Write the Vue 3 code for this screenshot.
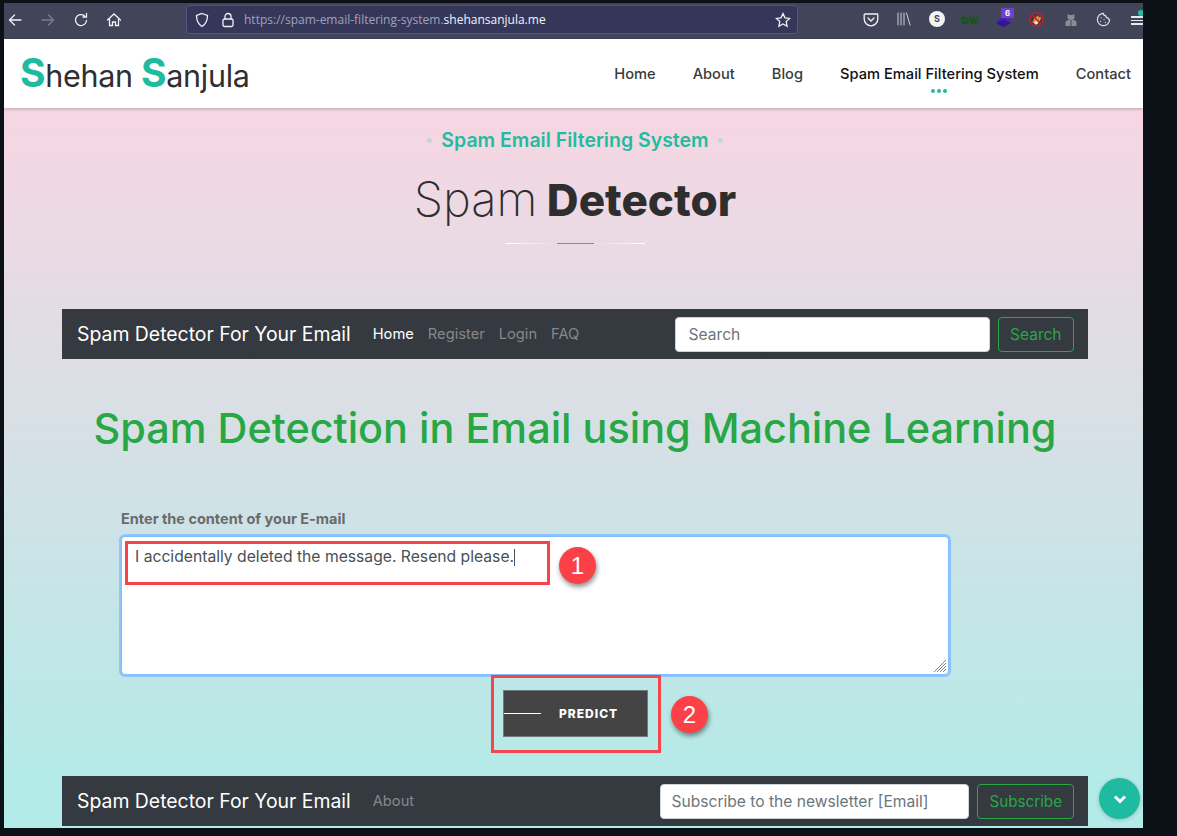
<script setup>
const navLinks = [
  { label: 'Home' },
  { label: 'About' },
  { label: 'Blog' },
  { label: 'Spam Email Filtering System', active: true },
  { label: 'Contact' },
]
const detectorLinks = ['Home', 'Register', 'Login', 'FAQ']
</script>

<template>
  <div class="frame">
    <!-- browser toolbar -->
    <div class="toolbar">
      <div class="tool-btns">
        <svg class="ico" viewBox="0 0 16 16"><path d="M14 8H2.500M7.500 3 2.500 8l5 5" /></svg>
        <svg class="ico dim" viewBox="0 0 16 16"><path d="M2 8h11.500M8.500 3l5 5-5 5" /></svg>
        <svg class="ico" viewBox="0 0 16 16"><path d="M13.500 8.500A5.500 5.500 0 1 1 11.500 3.800M13.500 1.500v3.500H10" /></svg>
        <svg class="ico" viewBox="0 0 16 16"><path d="M1.500 8 8 2l6.500 6M3.500 7v6.500h3V10h3v3.500h3V7" /></svg>
      </div>
      <div class="urlbar">
        <svg class="ico shield" viewBox="0 0 16 16"><path d="M8 1.500 13.500 3.500c0 5-1.500 8.500-5.500 11-4-2.500-5.500-6-5.500-11z" /></svg>
        <svg class="ico lock" viewBox="0 0 16 16"><rect x="3" y="7" width="10" height="7.500" rx="1.500" /><path d="M5 7V4.500a3 3 0 0 1 6 0V7" /></svg>
        <span class="url"><span class="url-dim">https://spam-email-filtering-system.</span>shehansanjula.me</span>
        <svg class="ico star" viewBox="0 0 16 16"><path d="m8 1.500 2 4.300 4.700.6-3.500 3.200.9 4.700L8 12l-4.100 2.300.9-4.700L1.300 6.400 6 5.800z" /></svg>
      </div>
      <div class="addons">
        <svg class="ico pocket" viewBox="0 0 16 16"><path d="M2 3h12a.8.8 0 0 1 .8.8V8a6.800 6.800 0 0 1-13.600 0V3.800A.8.8 0 0 1 2 3zM5 7l3 3 3-3" /></svg>
        <svg class="ico library" viewBox="0 0 16 16"><path d="M2 2v12M5 2v12M8 2v12M10.500 2l3.500 12" /></svg>
        <span class="addon-s">S</span>
        <span class="addon-bw">bw</span>
        <span class="addon-stack">
          <svg viewBox="0 0 16 12"><path d="M8 0 16 4.500 8 9 0 4.500z" fill="#4a24b8" /><path d="M0 7 8 11.500 16 7 8 3z" fill="#33168f" /></svg>
          <b>6</b>
        </span>
        <svg class="addon-fox" viewBox="0 0 16 16">
          <circle cx="8" cy="8" r="7" fill="#3e3a4c" />
          <path d="M3.500 11 6 6.500l4-3 .5 2 2.500-.5-1 4-4 4z" fill="#e8873a" />
          <path d="M5 11.500 8 9l2 3-2.500 1.500z" fill="#f4e2c8" />
          <circle cx="8" cy="8" r="7" fill="none" stroke="#c4202c" stroke-width="1.500" />
          <path d="M3 3 13 13" stroke="#c4202c" stroke-width="1.500" />
        </svg>
        <svg class="addon-gray" viewBox="0 0 12 13" fill="#8a8d98">
          <path d="M2.500 1 4 2h4l1.500-1v3.500a3.500 2.500 0 0 1-7 0z" />
          <path d="M0.500 13V8.500L3 7h2.500v6zM6.500 7H9l2.500 1.500V13h-5z" />
        </svg>
        <svg class="ico cookie" viewBox="0 0 16 16"><path d="M8 1.500a2.500 2.500 0 0 0 2.500 2.500 2.500 2.500 0 0 0 2.500 2.500 1.500 1.500 0 0 0 1.500 1.500A6.500 6.500 0 1 1 8 1.500zM5.500 6v.1M5 10v.1M8.500 8v.1M10 11v.1" /></svg>
        <span class="burger"><i></i><i></i><i></i><em></em></span>
      </div>
    </div>

    <!-- site header -->
    <header class="site-nav">
      <div class="logo"><span>S</span>hehan <span>S</span>anjula</div>
      <nav class="site-links">
        <a v-for="link in navLinks" :key="link.label" :class="{ active: link.active }">{{ link.label }}</a>
      </nav>
    </header>

    <main class="content">
      <section class="title-block">
        <div class="kicker"><i></i><span>Spam Email Filtering System</span><i></i></div>
        <h1 class="title"><span>Spam</span> <b>Detector</b></h1>
        <div class="divider"><i class="white left"></i><i class="teal"></i><i class="white right"></i></div>
      </section>

      <div class="bar top-bar">
        <span class="brand">Spam Detector For Your Email</span>
        <a v-for="(item, i) in detectorLinks" :key="item" class="bar-link" :class="{ on: i === 0 }">{{ item }}</a>
        <div class="bar-form">
          <input class="bar-input search" placeholder="Search" />
          <button class="bar-btn">Search</button>
        </div>
      </div>

      <h2 class="headline">Spam Detection in Email using Machine Learning</h2>

      <form class="email-form" @submit.prevent>
        <label class="field-label">Enter the content of your E-mail</label>
        <div class="text-wrap">
          <div class="textarea">I accidentally deleted the message. Resend please.<i class="caret"></i></div>
          <svg class="grip" viewBox="0 0 14 14"><path d="M13 1 1 13M13 4 4 13M13 7 7 13M13 10 10 13" /></svg>
          <div class="mark mark-one"></div>
          <div class="num num-one">1</div>
        </div>
        <div class="predict-row">
          <div class="predict-wrap">
            <button class="predict"><i></i>PREDICT</button>
            <div class="mark mark-two"></div>
            <div class="num num-two">2</div>
          </div>
        </div>
      </form>

      <div class="bar bottom-bar">
        <span class="brand">Spam Detector For Your Email</span>
        <a class="bar-link">About</a>
        <div class="bar-form">
          <input class="bar-input subscribe" placeholder="Subscribe to the newsletter [Email]" />
          <button class="bar-btn subscribe-btn">Subscribe</button>
        </div>
      </div>

      <div class="scroll-btn">
        <svg viewBox="0 0 16 16"><path d="M3 5.500 8 10.500 13 5.500" /></svg>
      </div>
    </main>
  </div>
</template>

<style scoped>
.frame {
  width: 1139px;
  margin: 3px 0 0 4px;
  font-family: Inter, "Noto Sans", sans-serif;
}

/* toolbar */
.toolbar {
  height: 36px;
  padding-bottom: 3px;
  box-sizing: border-box;
  background: #42445a;
  display: flex;
  align-items: center;
  position: relative;
}
.tool-btns {
  display: flex;
  align-items: center;
  gap: 17px;
  padding-left: 3px;
  width: 182px;
  box-sizing: border-box;
}
.ico {
  width: 16px;
  height: 16px;
  fill: none;
  stroke: #f2f2f5;
  stroke-width: 1.300;
  stroke-linecap: round;
  flex: none;
}
.ico.dim {
  stroke: #7d7f90;
}
.urlbar {
  width: 612px;
  height: 29px;
  box-sizing: border-box;
  background: #35375a;
  border: 1px solid #51557f;
  border-radius: 4px;
  display: flex;
  align-items: center;
  padding: 0 6px 0 7px;
}
.lock {
  margin-left: 10px;
}
.url {
  font-family: "Open Sans", sans-serif;
  font-size: 12px;
  color: #f4f4f8;
  margin-left: 8px;
  flex: 1;
  white-space: nowrap;
}
.url-dim {
  color: #a0a2b8;
}
.addons {
  position: absolute;
  left: 652px;
  right: 0;
  top: 0;
  bottom: 0;
  overflow: hidden;
}
.addons > * {
  position: absolute;
}
.pocket { left: 207px; top: 8px; }
.library { left: 240px; top: 8px; stroke-width: 1; stroke: #d0d0d8; }
.addon-s {
  left: 273px;
  top: 8px;
  width: 16px;
  height: 16px;
  border-radius: 50%;
  background: #f4f4f4;
  color: #42445a;
  font-size: 9px;
  font-weight: 700;
  line-height: 16px;
  text-align: center;
}
.addon-bw {
  left: 305px;
  top: 9px;
  font-size: 12px;
  font-weight: 800;
  color: #0f5a12;
}
.addon-stack {
  left: 340px;
  top: 2px;
  width: 20px;
  height: 24px;
}
.addon-stack svg {
  position: absolute;
  left: 0;
  top: 11px;
  width: 15px;
  height: 12px;
}
.addon-stack b {
  position: absolute;
  left: 5px;
  top: 3px;
  width: 13px;
  height: 10px;
  background: #6f3fd0;
  color: #fff;
  font-size: 8px;
  line-height: 10px;
  text-align: center;
  border-radius: 1px;
}
.addon-fox { left: 373px; top: 9px; width: 15px; height: 15px; }
.addon-gray { left: 409px; top: 10px; width: 12px; height: 13px; }
.cookie { left: 440px; top: 9px; width: 15px; height: 15px; stroke: #e0e0e6; }
.burger {
  left: 475px;
  top: 13px;
  width: 12px;
}
.burger i {
  display: block;
  height: 1.500px;
  background: #e8e8ee;
  margin-bottom: 2px;
}
.burger em {
  position: absolute;
  left: 7px;
  top: -6px;
  width: 6px;
  height: 6px;
  border-radius: 50%;
  background: #1fbfa0;
}

/* site header */
.site-nav {
  height: 69px;
  background: #fff;
  display: flex;
  align-items: center;
  justify-content: space-between;
  padding: 0 12px 0 16px;
  box-shadow: 0 1px 3px rgba(0, 0, 0, 0.25);
  position: relative;
  z-index: 1;
}
.logo {
  font-size: 30.500px;
  color: #2e2e33;
  letter-spacing: -0.3px;
  margin-top: -3px;
}
.logo span {
  font-size: 39px;
  font-weight: 700;
  color: #1ebba0;
}
.site-links {
  display: flex;
  gap: 37px;
}
.site-links a {
  font-size: 14.670px;
  font-weight: 500;
  color: #3a3a3a;
  position: relative;
}
.site-links a.active {
  color: #111;
}
.site-links a.active::after {
  content: "";
  position: absolute;
  left: 50%;
  top: 24px;
  margin-left: -2px;
  width: 4px;
  height: 4px;
  border-radius: 50%;
  background: #1ebba0;
  box-shadow: -6px 0 #1ebba0, 6px 0 #1ebba0;
}

.content {
  height: 720px;
  background: linear-gradient(180deg, #f7d6e3 0%, #b2ebe8 96%);
  position: relative;
  overflow: hidden;
}

.title-block {
  display: flex;
  flex-direction: column;
  align-items: center;
  padding-top: 20px;
  padding-left: 3px;
}
.kicker {
  display: flex;
  align-items: center;
  gap: 9px;
  font-size: 19.500px;
  line-height: 24px;
  font-weight: 600;
  color: #1fbd9f;
}
.kicker i {
  width: 5px;
  height: 5px;
  border-radius: 50%;
  background: #c4d6db;
}
.title {
  margin: 19px 0 0;
  font-size: 44px;
  line-height: 56px;
  font-weight: 300;
  word-spacing: -3px;
  color: #2e2e2e;
}
.title span {
  font-size: 47px;
  font-weight: 200;
}
.title b {
  font-weight: 800;
}
.divider {
  display: flex;
  width: 139px;
  height: 1px;
  margin-top: 15px;
}
.divider i {
  flex: 1;
  height: 1px;
}
.divider .left {
  background: linear-gradient(90deg, #fff, transparent);
}
.divider .right {
  background: linear-gradient(90deg, transparent, #fff);
}
.divider .teal {
  flex: none;
  width: 37px;
  background: #3aae9a;
}

.bar {
  width: 1026px;
  height: 50px;
  margin-left: 58px;
  background: #343a40;
  display: flex;
  align-items: center;
  padding: 0 14px 0 15px;
  box-sizing: border-box;
}
.top-bar {
  margin-top: 65px;
}
.brand {
  font-size: 19.400px;
  color: #fff;
  margin-right: 22px;
  white-space: nowrap;
}
.bar-link {
  font-size: 14.700px;
  color: #85888c;
  margin-right: 14px;
}
.bar-link.on {
  color: #fff;
}
.bar-form {
  margin-left: auto;
  display: flex;
  gap: 8px;
}
.bar-input {
  height: 35px;
  box-sizing: border-box;
  border: 1px solid #ced4da;
  border-radius: 4px;
  background: #fff;
  padding: 0 10px;
  font: 15.600px Inter, sans-serif;
  outline: none;
}
.bar-input::placeholder {
  color: #6c757d;
  opacity: 1;
}
.search {
  width: 315px;
  padding-left: 13px;
}
.subscribe {
  width: 309px;
}
.bar-btn {
  height: 35px;
  box-sizing: border-box;
  padding: 0 11.500px;
  border: 1px solid #28a745;
  border-radius: 4px;
  background: transparent;
  color: #28a745;
  font: 15.500px Inter, sans-serif;
}
.subscribe-btn {
  padding: 0 11px;
  font-size: 15.200px;
}

.headline {
  width: 1026px;
  margin: 43px 0 0 58px;
  text-align: center;
  font-size: 41.400px;
  line-height: 52px;
  font-weight: 500;
  color: #28a745;
}

.email-form {
  width: 828px;
  margin: 56px 0 0 117px;
}
.field-label {
  display: block;
  font-size: 14.500px;
  line-height: 17px;
  font-weight: 700;
  color: #6a6a6a;
  margin-bottom: 9px;
}
.text-wrap {
  position: relative;
}
.textarea {
  height: 139px;
  box-sizing: border-box;
  background: #fff;
  border: 1px solid #80bdff;
  border-radius: 4px;
  box-shadow: 0 0 0 2px rgba(128, 189, 255, 0.8);
  padding: 9px 13px;
  font-size: 15.700px;
  line-height: 21px;
  color: #495057;
}
.caret {
  display: inline-block;
  width: 1px;
  height: 17px;
  background: #495057;
  vertical-align: middle;
}
.grip {
  position: absolute;
  right: 2px;
  bottom: 2px;
  width: 14px;
  height: 14px;
  fill: none;
  stroke: #858585;
  stroke-width: 1;
}
.mark {
  position: absolute;
  border: 3px solid #f5444a;
  box-sizing: border-box;
  pointer-events: none;
}
.mark-one {
  left: 4px;
  top: 5px;
  width: 425px;
  height: 44px;
}
.num {
  position: absolute;
  width: 37px;
  height: 37px;
  border-radius: 50%;
  background: #fb4147;
  color: #fff;
  font: 24px/37px "Liberation Sans", sans-serif;
  text-align: center;
  box-shadow: 1px 3px 5px rgba(0, 0, 0, 0.45);
}
.num-one {
  left: 438px;
  top: 11px;
}
.predict-row {
  display: flex;
  margin: 15px 0 0 382px;
}
.predict-wrap {
  position: relative;
}
.predict {
  display: flex;
  align-items: center;
  width: 145px;
  height: 47px;
  padding: 0;
  border: 1px solid #6e7a7c;
  background: #444;
  color: #fff;
  font: 800 12px Inter, sans-serif;
  letter-spacing: 1px;
}
.predict i {
  width: 37px;
  height: 1px;
  background: #fff;
  margin-right: 18px;
}
.mark-two {
  left: -12px;
  top: -15px;
  width: 170px;
  height: 78px;
}
.num-two {
  left: 168px;
  top: 6px;
}

.bottom-bar {
  margin-top: 39px;
}

.scroll-btn {
  position: absolute;
  right: 3px;
  bottom: 9px;
  width: 41px;
  height: 41px;
  border-radius: 50%;
  background: #1ebba0;
  display: flex;
  align-items: center;
  justify-content: center;
  box-shadow: 0 1px 4px rgba(0, 0, 0, 0.2);
}
.scroll-btn svg {
  width: 16px;
  height: 16px;
  fill: none;
  stroke: #fff;
  stroke-width: 3;
}
</style>

<style>
html,
body {
  background: #0c1017;
  overflow: hidden;
}
</style>
